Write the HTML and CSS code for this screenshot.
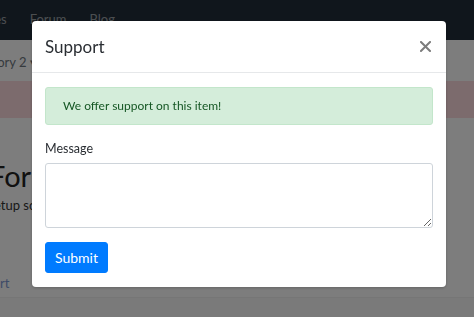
FILE: index.html
```html
<!DOCTYPE html>
<html lang="en">
<head>
<meta charset="utf-8">
<title>Support</title>
<link rel="stylesheet" href="styles.css">
</head>
<body>
<div class="page">
  <nav class="navbar">
    <span class="nav-link nav-first">Rules</span>
    <span class="nav-link">Forum</span>
    <span class="nav-link">Blog</span>
  </nav>
  <div class="subnav">
    <span class="crumb">Category 2 ▾</span>
  </div>
  <div class="band"></div>
  <main class="content">
    <h1 class="heading">Forum</h1>
    <p class="lead">Setup screen for the forum</p>
    <a class="link">Support</a>
  </main>
  <footer class="footer"></footer>
</div>

<div class="backdrop"></div>

<div class="modal-wrap">
  <div class="modal">
    <div class="modal-header">
      <h5 class="modal-title">Support</h5>
      <button class="close" type="button" aria-label="Close">
        <svg width="11" height="11" viewBox="0 0 11 11"><path d="M1 1 L10 10 M10 1 L1 10" stroke="currentColor" stroke-width="2" stroke-linecap="square" fill="none"/></svg>
      </button>
    </div>
    <div class="modal-body">
      <div class="alert">We offer support on this item!</div>
      <label class="label" for="msg">Message</label>
      <textarea class="textarea" id="msg"></textarea>
      <button class="btn" type="button">Submit</button>
    </div>
  </div>
</div>
</body>
</html>
```

FILE: styles.css
```css
* { box-sizing: border-box; }
html, body { margin: 0; padding: 0; }
body {
  font-family: Lato, "Noto Sans", sans-serif;
  color: #212529;
  background: #fafafa;
  width: 474px;
  height: 317px;
  overflow: hidden;
}
.page { display: flex; flex-direction: column; height: 317px; }
.navbar {
  height: 40px;
  background: #202c38;
  display: flex;
  align-items: flex-start;
  padding-top: 10px;
  gap: 23px;
  font-size: 13px;
  line-height: 18px;
}
.nav-link { color: rgba(255,255,255,.55); }
.nav-first { margin-left: -24px; }
.subnav {
  height: 41px;
  display: flex;
  align-items: center;
  font-size: 13px;
  color: #6c757d;
  padding-top: 2px;
}
.crumb { margin-left: -36px; }
.band { height: 37px; background: #f8d7da; }
.content { flex: 1; padding-top: 41px; }
.heading {
  margin: 0 0 0 -11px;
  font-size: 29px;
  font-weight: 400;
  line-height: 34px;
  color: #222;
}
.lead {
  margin: 3px 0 0 -13px;
  font-size: 13px;
  line-height: 18px;
  color: #333;
}
.link {
  display: block;
  margin: 60px 0 0 -36px;
  font-size: 13px;
  line-height: 18px;
  color: #7a96d0;
}
.footer { height: 20px; border-top: 1px solid #ececec; background: #f4f4f4; }

.backdrop { position: fixed; inset: 0; background: rgba(0,0,0,.5); }

.modal-wrap {
  position: fixed;
  inset: 0;
  padding: 21px 0 0 32px;
}
.modal {
  width: 414px;
  background: #fff;
  border-radius: 4px;
  box-shadow: 0 1px 3px rgba(0,0,0,.2);
}
.modal-header {
  display: flex;
  align-items: center;
  justify-content: space-between;
  padding: 14px 13px 13px 13px;
  border-bottom: 1px solid #e6e8ea;
}
.modal-title {
  margin: 0;
  font-size: 17px;
  font-weight: 400;
  line-height: 24px;
  color: #2a2e33;
}
.close {
  border: 0;
  background: transparent;
  padding: 0;
  margin-right: 2px;
  margin-top: -1px;
  color: #7c7c7c;
  display: flex;
  cursor: pointer;
}
.modal-body {
  padding: 14px 13px 14px 13px;
  display: flex;
  flex-direction: column;
  align-items: flex-start;
}
.alert {
  width: 100%;
  background: #d4edda;
  border: 1px solid #c3e6cb;
  border-radius: 3px;
  color: #155724;
  padding: 9px 17px;
  font-size: 12px;
  line-height: 18px;
  margin-bottom: 15px;
}
.label {
  font-size: 12.5px;
  line-height: 18px;
  margin-bottom: 5px;
  color: #2a2e33;
}
.textarea {
  width: 100%;
  height: 65px;
  border: 1px solid #ced4da;
  border-radius: 3px;
  margin: 0 0 14px 0;
  font: inherit;
  resize: vertical;
  display: block;
}
.btn {
  background: #007bff;
  color: #fff;
  border: 1px solid #007bff;
  border-radius: 3px;
  height: 31px;
  padding: 0 9px;
  font-family: inherit;
  font-size: 14px;
  line-height: 20px;
}
```
